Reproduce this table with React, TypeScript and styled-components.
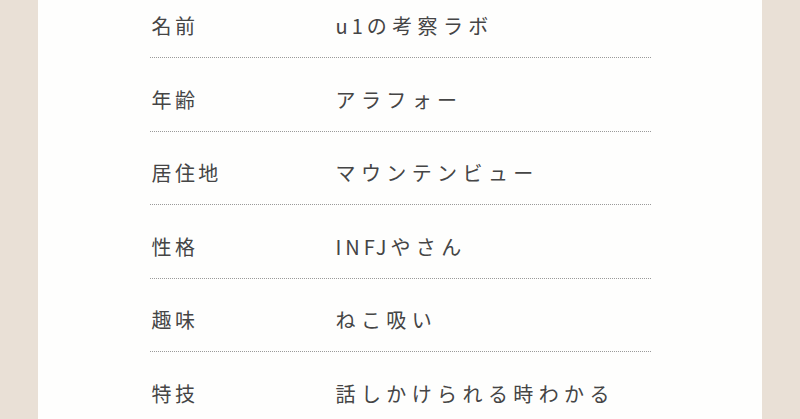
import React from 'react';
import styled, { createGlobalStyle } from 'styled-components';

const GlobalStyle = createGlobalStyle`
  html, body {
    margin: 0;
    padding: 0;
    background-color: #e9e0d6;
  }
`;

const PageView = styled.div`
  width: 100%;
  height: 419px;
  display: flex;
  justify-content: center;
  overflow: hidden;
`;

const Panel = styled.div`
  width: 724px;
  height: 100%;
  background-color: #fefefd;
  display: flex;
  justify-content: center;
`;

const ProfileList = styled.dl`
  width: 501px;
  margin: 0;
  padding: 0;
`;

const ProfileRow = styled.div`
  display: grid;
  grid-template-columns: 186px 1fr;
  align-items: center;
  padding: 26.5px 0 16px;
  border-bottom: 1px dotted #9a9a9a;
  font-family: 'Noto Sans CJK JP', 'Noto Sans', sans-serif;
  font-size: 20px;
  font-weight: 400;
  line-height: 30px;
  color: #454545;
  &:first-child {
    padding-top: 11px;
  }
`;

const Label = styled.dt`
  margin: 0;
  padding-left: 2px;
  letter-spacing: 0.17em;
`;

const Value = styled.dd`
  margin: 0;
  letter-spacing: 0.27em;
`;

const Latin = styled.span`
  letter-spacing: 0.2em;
`;

const profile = [
  { label: '名前', value: 'u1の考察ラボ' },
  { label: '年齢', value: 'アラフォー' },
  { label: '居住地', value: 'マウンテンビュー' },
  { label: '性格', value: 'INFJやさん' },
  { label: '趣味', value: 'ねこ吸い' },
  { label: '特技', value: '話しかけられる時わかる' },
];

// 英数字だけ字間を詰める
const renderValue = (text: string) =>
  text.split(/([A-Za-z0-9]+)/).map((part, i) =>
    /^[A-Za-z0-9]+$/.test(part) ? <Latin key={i}>{part}</Latin> : part
  );

const App = () => {
  return (
    <>
      <GlobalStyle />
      <PageView>
        <Panel>
          <ProfileList>
            {profile.map((item) => (
              <ProfileRow key={item.label}>
                <Label>{item.label}</Label>
                <Value>{renderValue(item.value)}</Value>
              </ProfileRow>
            ))}
          </ProfileList>
        </Panel>
      </PageView>
    </>
  );
};

export default App;
